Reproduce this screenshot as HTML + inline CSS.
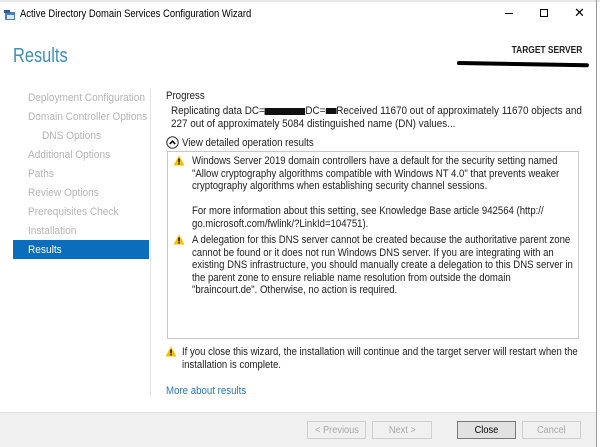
<!DOCTYPE html>
<html><head><style>
*{margin:0;padding:0;box-sizing:border-box}
body{width:600px;height:447px;overflow:hidden;background:#fff;font-family:"Liberation Sans",sans-serif;font-size:11px;color:#1e1e1e;position:relative}
.a{position:absolute;white-space:nowrap;transform-origin:0 0}
.s{transform:scaleX(0.88)}
.nav{position:absolute;left:28px;color:#b4b4b4;font-size:11px;white-space:nowrap;transform:scaleX(0.92);transform-origin:0 0}
.warn{position:absolute;width:12px;height:11px}
.btn{position:absolute;top:421px;height:18px;border:1px solid #cfcfcf;background:#f0f0f0;color:#a8a8a8;text-align:center;line-height:16px;font-size:10.5px}
.btn span{display:inline-block;transform:scaleX(0.88)}
</style></head><body>
<div style="position:absolute;left:0;top:0;width:600px;height:2px;background:#e8e8e8"></div>
<svg class="a" style="left:4px;top:9px" width="12" height="12"><rect x="1" y="3" width="10" height="8" fill="#4a7fc0"/><rect x="0" y="1" width="6" height="3" fill="#2a5a9a"/><rect x="3" y="6" width="7" height="4" fill="#dde8f5"/></svg>
<div class="a" style="left:20px;top:8px;font-size:11px;color:#000;transform:scaleX(0.86)">Active Directory Domain Services Configuration Wizard</div>
<div class="a" style="left:505px;top:13px;width:8px;height:1px;background:#000"></div>
<div class="a" style="left:540px;top:9px;width:8px;height:8px;border:1px solid #000"></div>
<div class="a" style="left:574px;top:5px;font-size:13px;color:#000">✕</div>
<div style="position:absolute;left:596px;top:0;width:1px;height:447px;background:#9a9a9a"></div>
<div class="a" style="left:13px;top:45px;font-size:20px;color:#3b8fb8;transform:scaleX(0.82)">Results</div>
<div class="a" style="right:18px;top:44px;font-size:10.5px;font-weight:bold;color:#222;transform:scaleX(0.8);transform-origin:100% 0">TARGET SERVER</div>
<div class="a" style="left:457px;top:61px;width:132px;height:4px;background:#000;border-radius:2px;transform:rotate(1deg)"></div>
<div style="position:absolute;left:150px;top:88px;width:1px;height:308px;background:#e3e3e3"></div>
<div class="nav" style="top:92px">Deployment Configuration</div>
<div class="nav" style="top:111px">Domain Controller Options</div>
<div class="nav" style="top:130px;left:42px">DNS Options</div>
<div class="nav" style="top:149px">Additional Options</div>
<div class="nav" style="top:168px">Paths</div>
<div class="nav" style="top:187px">Review Options</div>
<div class="nav" style="top:206px">Prerequisites Check</div>
<div class="nav" style="top:225px">Installation</div>
<div style="position:absolute;left:13px;top:240px;width:136px;height:19px;background:#0a6ebd"></div>
<div class="nav" style="top:244px;color:#fff">Results</div>
<div class="a s" style="left:166px;top:90px">Progress</div>
<div class="a s" style="left:171px;top:105px;transform:scaleX(0.9)">Replicating data DC=<span style="display:inline-block;width:45px;height:7px;background:#111;vertical-align:middle"></span>DC=<span style="display:inline-block;width:12px;height:6px;background:#111;vertical-align:middle"></span>Received 11670 out of approximately 11670 objects and</div>
<div class="a s" style="left:171px;top:118px;transform:scaleX(0.9)">227 out of approximately 5084 distinguished name (DN) values...</div>
<svg class="a" style="left:166px;top:136px" width="13" height="13"><circle cx="6.5" cy="6.5" r="5.7" fill="#fff" stroke="#333" stroke-width="1"/><path d="M3.8 8 L6.5 5.2 L9.2 8" fill="none" stroke="#000" stroke-width="1.6"/></svg>
<div class="a s" style="left:182px;top:137px">View detailed operation results</div>
<div style="position:absolute;left:167px;top:151px;width:412px;height:188px;border:1px solid #c8c8c8"></div>
<svg class="warn" style="left:173px;top:155px" viewBox="0 0 12 11"><path d="M6 0.5 L11.5 10.5 H0.5Z" fill="#f5c000"/><rect x="5.3" y="3.5" width="1.4" height="4" fill="#000"/><rect x="5.3" y="8.2" width="1.4" height="1.3" fill="#000"/></svg>
<div class="a" style="left:192px;top:155px;line-height:12.6px;transform:scaleX(0.87)">Windows Server 2019 domain controllers have a default for the security setting named<br>"Allow cryptography algorithms compatible with Windows NT 4.0" that prevents weaker<br>cryptography algorithms when establishing security channel sessions.<br><br>For more information about this setting, see Knowledge Base article 942564 (http://<br>go.microsoft.com/fwlink/?LinkId=104751).</div>
<svg class="warn" style="left:173px;top:234px" viewBox="0 0 12 11"><path d="M6 0.5 L11.5 10.5 H0.5Z" fill="#f5c000"/><rect x="5.3" y="3.5" width="1.4" height="4" fill="#000"/><rect x="5.3" y="8.2" width="1.4" height="1.3" fill="#000"/></svg>
<div class="a" style="left:192px;top:234px;line-height:12.6px;transform:scaleX(0.87)">A delegation for this DNS server cannot be created because the authoritative parent zone<br>cannot be found or it does not run Windows DNS server. If you are integrating with an<br>existing DNS infrastructure, you should manually create a delegation to this DNS server in<br>the parent zone to ensure reliable name resolution from outside the domain<br>"braincourt.de". Otherwise, no action is required.</div>
<svg class="warn" style="left:165px;top:346px" viewBox="0 0 12 11"><path d="M6 0.5 L11.5 10.5 H0.5Z" fill="#f5c000"/><rect x="5.3" y="3.5" width="1.4" height="4" fill="#000"/><rect x="5.3" y="8.2" width="1.4" height="1.3" fill="#000"/></svg>
<div class="a" style="left:182px;top:346px;line-height:12.6px;transform:scaleX(0.87)">If you close this wizard, the installation will continue and the target server will restart when the<br>installation is complete.</div>
<div class="a s" style="left:166px;top:385px;color:#2a73c0">More about results</div>
<div style="position:absolute;left:0;top:412px;width:596px;height:35px;background:#f0f0f0;border-top:1px solid #e2e2e2"></div>
<div class="btn" style="left:307px;width:59px"><span>&lt; Previous</span></div>
<div class="btn" style="left:372px;width:60px"><span>Next &gt;</span></div>
<div class="btn" style="left:457px;width:59px;background:#e1e1e1;border-color:#7a7a7a;color:#000"><span>Close</span></div>
<div class="btn" style="left:522px;width:59px"><span>Cancel</span></div>
</body></html>
